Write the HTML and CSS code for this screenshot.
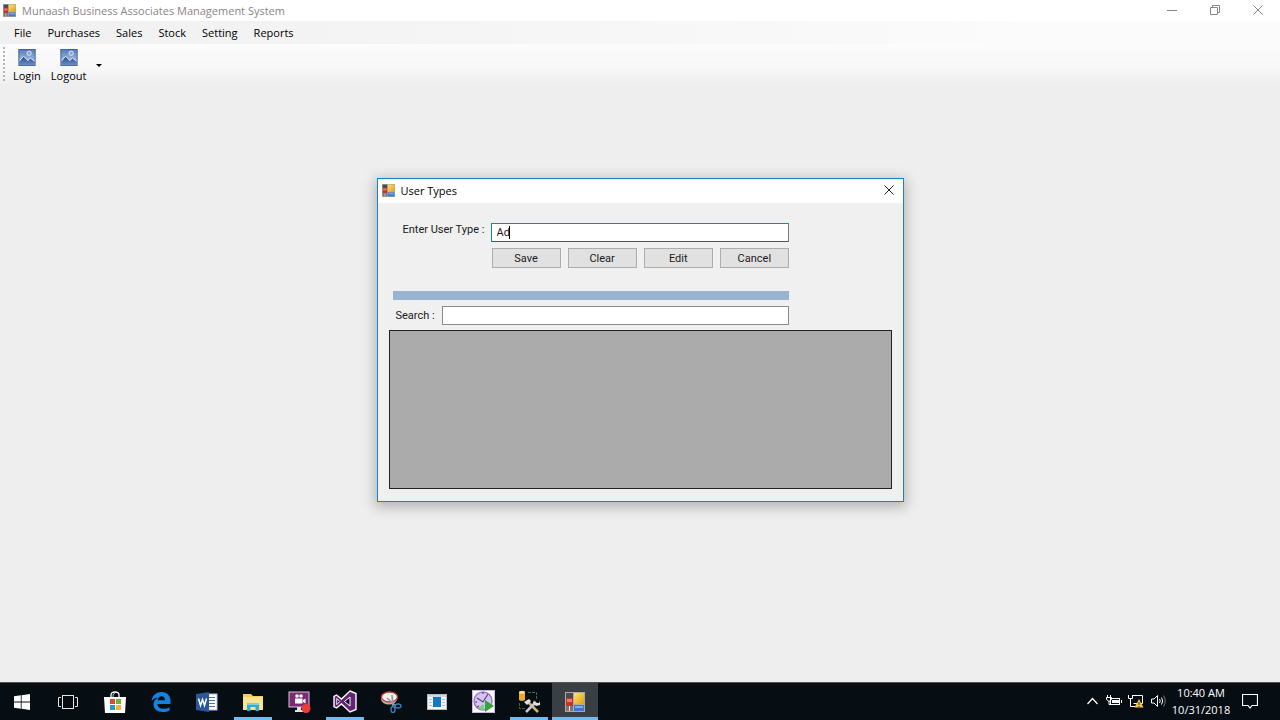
FILE: index.html
```html
<!DOCTYPE html>
<html lang="en">
<head>
    <meta charset="UTF-8">
    <meta name="viewport" content="width=device-width, initial-scale=1.0">
    <title>Munaash Business Associates Management System</title>
    <link rel="stylesheet" href="styles.css">
</head>
<body>
<!-- shared icons -->
<svg class="defs" aria-hidden="true">
    <defs>
        <linearGradient id="skyFill" x1="0" y1="0" x2="0" y2="1">
            <stop offset="0" stop-color="#5379b8"/>
            <stop offset="1" stop-color="#c4d8f2"/>
        </linearGradient>
        <linearGradient id="hillFill" x1="0" y1="0" x2="0" y2="1">
            <stop offset="0" stop-color="#2a4a85"/>
            <stop offset="1" stop-color="#6a90c8"/>
        </linearGradient>
        <linearGradient id="goldFill" x1="0" y1="0" x2="1" y2="1">
            <stop offset="0" stop-color="#ffe07a"/>
            <stop offset="1" stop-color="#e0a010"/>
        </linearGradient>
        <symbol id="form-icon" viewBox="0 0 20 20">
            <rect x="0" y="0" width="20" height="20" fill="#a9a9a9"/>
            <rect x="1" y="1" width="7" height="5" fill="#4a4a4a"/>
            <rect x="1" y="14" width="7" height="5" fill="#777"/>
            <path d="M4.5 14V19" stroke="#e0e0e0"/>
            <rect x="1" y="6" width="7" height="8" fill="#c5322c"/>
            <rect x="2" y="7" width="5" height="3" fill="#e77b70"/>
            <rect x="9" y="1" width="10" height="11" fill="url(#goldFill)"/>
            <rect x="9" y="13" width="10" height="6" fill="#3f74cf"/>
            <rect x="10" y="14" width="8" height="2" fill="#82aaf0"/>
        </symbol>
        <symbol id="picture-icon" viewBox="0 0 20 20">
            <rect x="0" y="0" width="20" height="20" fill="url(#skyFill)"/>
            <path d="M1 15L6 9L11 14L14 11L19 15V19H1Z" fill="url(#hillFill)"/>
            <path d="M1 14L6 8.500L11 13.500L14 10.500L19 14.500" fill="none" stroke="#e4eefb"/>
            <circle cx="12.500" cy="5" r="2.500" fill="#7ea2d8" stroke="#f2f7fe"/>
            <rect x="0.500" y="0.500" width="19" height="19" fill="none" stroke="#3f5f9a"/>
        </symbol>
    </defs>
</svg>

<div class="desktop">
    <header class="title-bar">
        <svg class="app-icon"><use href="#form-icon"/></svg>
        <h1>Munaash Business Associates Management System</h1>
        <div class="window-controls">
            <button type="button" aria-label="Minimize">
                <svg viewBox="0 0 10 10"><path d="M0 5.5H10"/></svg>
            </button>
            <button type="button" aria-label="Restore">
                <svg viewBox="0 0 10 10"><path d="M0.5 2.5H7.5V9.5H0.5ZM2.5 2V0.5H9.5V7.5H8"/></svg>
            </button>
            <button type="button" aria-label="Close">
                <svg viewBox="0 0 10 10"><path d="M0.5 0.5L9.5 9.5M9.5 0.5L0.5 9.5"/></svg>
            </button>
        </div>
    </header>

    <nav class="menu-bar">
        <button type="button">File</button>
        <button type="button">Purchases</button>
        <button type="button">Sales</button>
        <button type="button">Stock</button>
        <button type="button">Setting</button>
        <button type="button">Reports</button>
    </nav>

    <div class="tool-bar">
        <span class="grip"></span>
        <button type="button"><svg><use href="#picture-icon"/></svg>Login</button>
        <button type="button"><svg><use href="#picture-icon"/></svg>Logout</button>
        <button type="button" class="drop" aria-label="More"><span class="caret-down"></span></button>
    </div>

    <main class="workspace">
        <section class="dialog" aria-labelledby="dialogTitle">
            <div class="dialog-title">
                <svg class="app-icon"><use href="#form-icon"/></svg>
                <h2 id="dialogTitle">User Types</h2>
                <button type="button" aria-label="Close">
                    <svg viewBox="0 0 10 10"><path d="M0.5 0.5L9.5 9.5M9.5 0.5L0.5 9.5"/></svg>
                </button>
            </div>
            <form class="dialog-body">
                <div class="fields">
                    <div class="type-row">
                        <label for="userType">Enter User Type :</label>
                        <div class="input-wrap">
                            <input type="text" id="userType" class="active" value="Ad">
                            <span class="text-caret"></span>
                        </div>
                    </div>
                    <div class="buttons">
                        <button type="button">Save</button>
                        <button type="button">Clear</button>
                        <button type="button">Edit</button>
                        <button type="button">Cancel</button>
                    </div>
                    <div class="divider"></div>
                    <div class="search-row">
                        <label for="search">Search :</label>
                        <input type="text" id="search">
                    </div>
                </div>
                <div class="data-grid"></div>
            </form>
        </section>
    </main>

    <footer class="taskbar">
        <button type="button" class="start" aria-label="Start">
            <svg width="16" height="16" viewBox="0 0 16 16" fill="#fff">
                <path d="M0 2.2L6.8 1.3V7.6H0ZM7.6 1.2L16 0V7.6H7.6ZM0 8.4H6.8V14.7L0 13.8ZM7.6 8.4H16V16L7.6 14.8Z"/>
            </svg>
        </button>
        <button type="button" class="task-view" aria-label="Task View">
            <svg width="20" height="14" viewBox="0 0 20 14" fill="none" stroke="#e6e6e6">
                <rect x="4.500" y="0.500" width="11" height="13"/>
                <path d="M3 2.5H0.5V11.5H3M17 2.5H19.5V11.5H17"/>
            </svg>
        </button>
        <button type="button" aria-label="Store">
            <svg width="22" height="22" viewBox="0 0 22 22">
                <path d="M7 6V4Q7 1 11 1Q15 1 15 4V6" fill="none" stroke="#fff" stroke-width="1.300"/>
                <path d="M9 6V4Q9 2.500 11 2.500" fill="none" stroke="#bbb"/>
                <path d="M0 6H22L21 22H1Z" fill="#fff"/>
                <rect x="6" y="8" width="5" height="5" fill="#e04a2a"/>
                <rect x="12" y="8" width="5" height="5" fill="#74b32c"/>
                <rect x="6" y="14" width="5" height="5" fill="#1e9bd8"/>
                <rect x="12" y="14" width="5" height="5" fill="#f6b71c"/>
            </svg>
        </button>
        <button type="button" aria-label="Edge">
            <svg width="20" height="20" viewBox="0 0 20 20">
                <path d="M0.500 9C1.500 3 5.500 0 10.500 0C16.500 0 19.500 4 19.500 9V12H6.500C6.700 15.500 9.500 16.800 12.500 16.800C15 16.800 16.800 16.200 18.500 15.200V18.800C16.500 19.700 14.500 20 12 20C6 20 2.500 17 2.500 12.500C2.500 9.500 4.300 7.300 7 5.800C4 6 2 7 0.500 9ZM6.700 8.300H14C14 5.500 12.500 4.300 10.500 4.300C8.300 4.300 7 6 6.700 8.300Z" fill="#1680dc" fill-rule="evenodd"/>
            </svg>
        </button>
        <button type="button" aria-label="Word">
            <svg width="22" height="20" viewBox="0 0 22 20">
                <rect x="11" y="2" width="10" height="16" fill="#fff" stroke="#a8bfdf"/>
                <path d="M13 5.5H19M13 8.5H19M13 11.5H19M13 14.5H19" stroke="#3a78bd"/>
                <path d="M0 2L13 0V20L0 18Z" fill="#2b579a"/>
                <path d="M2.500 6.500L4.500 13.500L6.500 7.500L8.500 13.500L10.500 6.500" fill="none" stroke="#fff" stroke-width="1.500"/>
            </svg>
        </button>
        <button type="button" class="running" aria-label="File Explorer">
            <svg width="20" height="18" viewBox="0 0 20 18">
                <path d="M0 1H8L10 3H20V17H0Z" fill="#f1cd62"/>
                <path d="M0 4H20V17H0Z" fill="#fbe38f"/>
                <path d="M4 10H16V18H12.500V14H7.500V18H4Z" fill="#36a9d5"/>
                <path d="M4 10H16V12H4Z" fill="#79cdea"/>
            </svg>
        </button>
        <button type="button" aria-label="Screen recorder">
            <svg width="23" height="22" viewBox="0 0 23 22">
                <rect x="1" y="1" width="20" height="15" fill="#7b2a78" stroke="#d9c3d8"/>
                <circle cx="9" cy="5" r="1.800" fill="#fff"/>
                <circle cx="13" cy="5" r="1.800" fill="#fff"/>
                <path d="M7 7.500H14.500V12.500H7ZM15 9L17.500 7.500V12.500L15 11Z" fill="#fff"/>
                <path d="M9 16H13V19H16V21H7V19H9Z" fill="#e8e0e8"/>
                <circle cx="18" cy="17.500" r="4.500" fill="#ee3d38"/>
            </svg>
        </button>
        <button type="button" class="running" aria-label="Visual Studio">
            <svg width="24" height="23" viewBox="0 0 24 23">
                <path d="M17 1L23 3.500V19.500L17 22L8.500 14L3.500 18L1 16.500V6.500L3.500 5L8.500 9Z" fill="#68217a" stroke="#fff" stroke-width="1.400"/>
                <path d="M17 7V16L11.500 11.500ZM3.800 8.500V14.500L6.800 11.500Z" fill="#07101a" stroke="#fff"/>
            </svg>
        </button>
        <button type="button" aria-label="Snipping Tool">
            <svg width="22" height="22" viewBox="0 0 22 22">
                <ellipse cx="9" cy="8" rx="8" ry="5.500" fill="#b9b0b0"/>
                <ellipse cx="9.500" cy="6" rx="8" ry="5" fill="#f5eeee" stroke="#c83c36" stroke-width="1.300"/>
                <path d="M7 7L16 15M12 4L13 16" stroke="#90979e" stroke-width="1.600"/>
                <ellipse cx="18" cy="15" rx="3" ry="2" fill="none" stroke="#2d83b8" stroke-width="1.400"/>
                <ellipse cx="13" cy="18.500" rx="2" ry="3" fill="none" stroke="#2d83b8" stroke-width="1.400"/>
            </svg>
        </button>
        <button type="button" aria-label="Program window">
            <svg width="20" height="16" viewBox="0 0 20 16">
                <rect x="0.500" y="0.500" width="19" height="15" fill="#f4f4f4" stroke="#b9b9b9"/>
                <path d="M1 2H19" stroke="#cfd6dc" stroke-width="2"/>
                <rect x="6" y="3" width="8" height="10" fill="#1477c9"/>
                <path d="M2 5.500H5M2 8.500H5M2 11.500H5M15 5.500H18M15 8.500H18M15 11.500H18" stroke="#a9c3d6"/>
            </svg>
        </button>
        <button type="button" aria-label="Timer">
            <svg width="23" height="23" viewBox="0 0 23 23">
                <rect x="0.500" y="0.500" width="22" height="22" fill="#fff" stroke="#cdb6e2"/>
                <circle cx="11" cy="11" r="9" fill="#d5c5ec" stroke="#9a80c4" stroke-width="1.500"/>
                <path d="M5 8L11 12L16 4M11 2V4M3 12H5M5 17L7 16" fill="none" stroke="#59408c" stroke-width="1.200"/>
                <path d="M13 10L22 16L13 22Z" fill="#35a33e"/>
                <path d="M6 18L12 14V21Z" fill="#87c98c"/>
            </svg>
        </button>
        <button type="button" class="running" aria-label="SQL Server Management Studio">
            <svg width="23" height="24" viewBox="0 0 23 24">
                <path d="M1 2V10Q4 12 7 10V2Z" fill="#e8ac29"/>
                <ellipse cx="4" cy="2.200" rx="3" ry="1.500" fill="#ffe08a"/>
                <path d="M10 2.500H18.500V9M1.500 13V18.500H8" fill="none" stroke="#3f6e3a" stroke-dasharray="3 1"/>
                <path d="M9 11L20 22" stroke="#d9b46c" stroke-width="2.500"/>
                <path d="M18 12L8 22" stroke="#c3c9cf" stroke-width="2.500"/>
                <path d="M6 12L11 9L13 11L9 15Z" fill="#dfe3e7"/>
                <path d="M16 10L17 13L21 13L22 11V15L18 16L15 13Z" fill="#dfe3e7"/>
            </svg>
        </button>
        <button type="button" class="running current" aria-label="Munaash">
            <svg width="20" height="20"><use href="#form-icon"/></svg>
        </button>

        <div class="tray">
            <button type="button" aria-label="Show hidden icons">
                <svg width="11" height="8" viewBox="0 0 11 8" fill="none" stroke="#fff" stroke-width="1.200"><path d="M0.500 7L5.500 1.500L10.500 7"/></svg>
            </button>
            <button type="button" aria-label="Battery">
                <svg width="16" height="12" viewBox="0 0 16 12" fill="none" stroke="#fff">
                    <rect x="4.500" y="3.500" width="9" height="6"/>
                    <rect x="6" y="5" width="7" height="3" fill="#fff" stroke="none"/>
                    <path d="M15.500 5V8M1.500 0V2M4.500 0V2M0.500 2.500H5.500V4.500L3 6.500L0.500 4.500ZM3 6V9.500H5"/>
                </svg>
            </button>
            <button type="button" aria-label="Network">
                <svg width="16" height="14" viewBox="0 0 16 14" fill="none" stroke="#fff">
                    <path d="M5 1.500H14.500V9.500H5.500M0.500 1V4.500H4.500V1M2.500 5V12.500H7"/>
                    <path d="M11 5L15.500 13.500H6.500Z" fill="#f6c544" stroke="none"/>
                    <path d="M11 8V11M11 12V13" stroke="#3a2b00"/>
                </svg>
            </button>
            <button type="button" aria-label="Volume">
                <svg width="15" height="14" viewBox="0 0 15 14" fill="none" stroke="#fff">
                    <path d="M0.500 5H3L6.500 1.500V12.500L3 9H0.500Z"/>
                    <path d="M8.500 5Q10 7 8.500 9M10.500 3.500Q13 7 10.500 10.500"/>
                    <path d="M12.500 1.500Q16 7 12.500 12.500" stroke="#777"/>
                </svg>
            </button>
            <div class="clock">
                <span>10:40 AM</span>
                <span>10/31/2018</span>
            </div>
            <button type="button" aria-label="Notifications">
                <svg width="16" height="16" viewBox="0 0 16 16" fill="none" stroke="#fff" stroke-width="1.200"><path d="M0.500 1.500H15.500V12.500H10L8 15L6 12.500H0.500Z"/></svg>
            </button>
        </div>
    </footer>
</div>
</body>
</html>
```

FILE: styles.css
```css
* {
    box-sizing: border-box;
}
body {
    margin: 0;
    font-family: "Open Sans", "Noto Sans", sans-serif;
    font-size: 11px;
    color: #000;
}
button {
    font: inherit;
    color: inherit;
    padding: 0;
    border: none;
    background: none;
}
h1, h2 {
    margin: 0;
    font-size: 11px;
    font-weight: normal;
}
.defs {
    display: block;
    width: 0;
    height: 0;
}
.desktop {
    display: flex;
    flex-direction: column;
    min-height: 100vh;
    background-color: #eee;
}

/* main window */
.title-bar {
    display: flex;
    align-items: center;
    height: 21px;
    padding: 0 1px 0 3px;
    background-color: #fff;
    color: #8c8587;
}
.app-icon {
    width: 13px;
    height: 13px;
    margin-right: 6px;
}
.window-controls {
    display: flex;
    height: 20px;
    margin-left: auto;
}
.window-controls button {
    width: 43px;
}
.window-controls svg,
.dialog-title button svg {
    width: 10px;
    height: 10px;
    fill: none;
    stroke: #888;
}
.menu-bar {
    display: flex;
    align-items: center;
    gap: 16px;
    height: 23px;
    padding-left: 14px;
    background: linear-gradient(to right, #f0f0f0, #fbfbfb 80%);
}
.tool-bar {
    display: flex;
    height: 42px;
    padding: 3px;
    background: linear-gradient(#fcfcfc, #f7f7f7 60%, #eee);
}
.tool-bar button {
    display: flex;
    flex-direction: column;
    align-items: center;
    gap: 2px;
    padding: 2px 5px 0;
    line-height: 15px;
}
.tool-bar svg {
    width: 20px;
    height: 20px;
}
.grip {
    width: 2px;
    height: 34px;
    margin-right: 3px;
    background: repeating-linear-gradient(#b5b5b5 0 2px, transparent 2px 4px);
}
.tool-bar .drop {
    justify-content: center;
    padding: 0 5px;
}
.caret-down {
    border: 3px solid transparent;
    border-top-color: #000;
    border-bottom: none;
}

/* user types dialog */
.workspace {
    flex: 1;
    padding: 92px 20px 20px;
}
.dialog {
    max-width: 527px;
    margin: 0 auto;
    border: 1px solid #1883c8;
    background-color: #f0f0f0;
    box-shadow: 0 3px 12px 2px rgba(0, 0, 0, 0.25);
}
.dialog-title {
    display: flex;
    align-items: center;
    height: 24px;
    padding: 0 0 2px 4px;
    background-color: #fff;
}
.dialog-title button {
    width: 28px;
    height: 22px;
    margin-left: auto;
}
.dialog-title button svg {
    stroke: #222;
}
.dialog-body {
    padding: 20px 11px 12px;
    font-family: Roboto, "Liberation Sans", sans-serif;
    color: #1a1a1a;
}
.fields {
    width: 80%;
    padding: 0 2px 0 4px;
}
.type-row {
    display: flex;
    padding-left: 10px;
}
.type-row label {
    width: 88px;
    line-height: 14px;
}
.input-wrap {
    position: relative;
    flex: 1;
}
input {
    display: block;
    width: 100%;
    height: 19px;
    padding: 0 5px;
    border: 1px solid #8a8a8a;
    background-color: #fff;
    color: inherit;
    font: inherit;
    outline: none;
}
input.active {
    border-color: #0a84cc #7a7a7a #555 #0a84cc;
}
.text-caret {
    position: absolute;
    left: 18px;
    top: 3px;
    width: 1px;
    height: 13px;
    background-color: #000;
}
.buttons {
    display: grid;
    grid-template-columns: repeat(4, 1fr);
    gap: 7px;
    margin: 6px 0 0 99px;
}
.buttons button {
    height: 20px;
    border: 1px solid #adadad;
    background-color: #e1e1e1;
}
.divider {
    height: 9px;
    margin: 23px 0 6px;
    background-color: #99b4d1;
}
.search-row {
    display: flex;
    align-items: center;
    padding-left: 3px;
}
.search-row label {
    width: 46px;
}
.search-row input {
    flex: 1;
}
.data-grid {
    height: 159px;
    margin-top: 5px;
    border: 1px solid #222;
    background-color: #ababab;
}

/* taskbar */
.taskbar {
    display: flex;
    height: 38px;
    border-top: 1px solid #555;
    background-color: #060d13;
    color: #fff;
}
.taskbar button {
    display: flex;
    align-items: center;
    justify-content: center;
    width: 46px;
}
.taskbar .start {
    width: 44px;
}
.taskbar .task-view {
    width: 48px;
}
.taskbar .running {
    background: linear-gradient(#76b9ed, #76b9ed) bottom / 38px 3px no-repeat;
}
.taskbar .current {
    background-color: #3a3f43;
    background-size: 100% 3px;
}
.tray {
    display: flex;
    align-items: center;
    margin-left: auto;
    padding: 0 19px 2px 0;
}
.taskbar .tray button {
    width: 22px;
}
.clock {
    display: flex;
    flex-direction: column;
    align-items: center;
    width: 64px;
    margin-right: 6px;
    line-height: 17px;
}
```
